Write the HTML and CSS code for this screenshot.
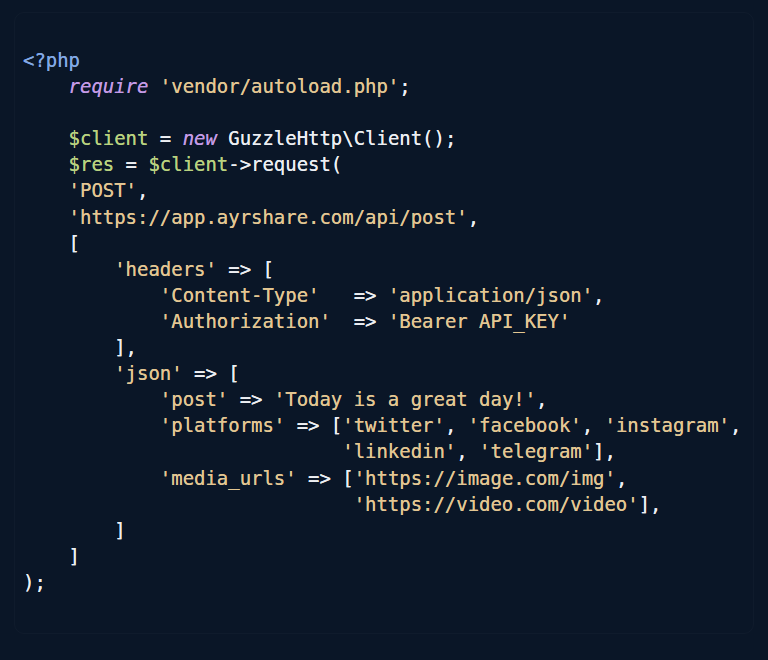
FILE: index.html
```html
<!DOCTYPE html>
<html>
<head>
<meta charset="utf-8">
<link rel="stylesheet" href="styles.css">
</head>
<body>
<div class="frame">
<pre class="code"><span class="tag">&lt;?php</span>
    <span class="kw">require</span> <span class="str">'vendor/autoload.php'</span>;

    <span class="var">$client</span> = <span class="kw">new</span> GuzzleHttp\Client();
    <span class="var">$res</span> = <span class="var">$client</span>-&gt;request(
    <span class="str">'POST'</span>,
    <span class="str">'https://app.ayrshare.com/api/post'</span>,
    [
        <span class="str">'headers'</span> =&gt; [
            <span class="str">'Content-Type'</span>   =&gt; <span class="str">'application/json'</span>,
            <span class="str">'Authorization'</span>  =&gt; <span class="str">'Bearer API_KEY'</span>
        ],
        <span class="str">'json'</span> =&gt; [
            <span class="str">'post'</span> =&gt; <span class="str">'Today is a great day!'</span>,
            <span class="str">'platforms'</span> =&gt; [<span class="str">'twitter'</span>, <span class="str">'facebook'</span>, <span class="str">'instagram'</span>,
                            <span class="str">'linkedin'</span>, <span class="str">'telegram'</span>],
            <span class="str">'media_urls'</span> =&gt; [<span class="str">'https://image.com/img'</span>,
                             <span class="str">'https://video.com/video'</span>],
        ]
    ]
);</pre>
</div>
</body>
</html>
```
FILE: styles.css
```css
html, body {
  margin: 0;
  padding: 0;
  background: #0a1627;
}
body {
  width: 768px;
  height: 660px;
  overflow: hidden;
}
.frame {
  margin: 12px 14px 0 14px;
  height: 622px;
  box-sizing: border-box;
  border: 1px solid rgba(255, 255, 255, 0.025);
  border-radius: 10px;
  padding: 34px 0 0 8px;
}
.code {
  margin: 0;
  font-family: "DejaVu Sans Mono", monospace;
  font-size: 18.95px;
  line-height: 26.1px;
  color: #eceef2;
  white-space: pre;
  text-shadow: 0 0 0.4px currentColor;
}
.tag { color: #82a9e6; }
.kw { color: #c49ae6; font-style: italic; }
.var { color: #b9d27f; }
.str { color: #e3c692; }
```
